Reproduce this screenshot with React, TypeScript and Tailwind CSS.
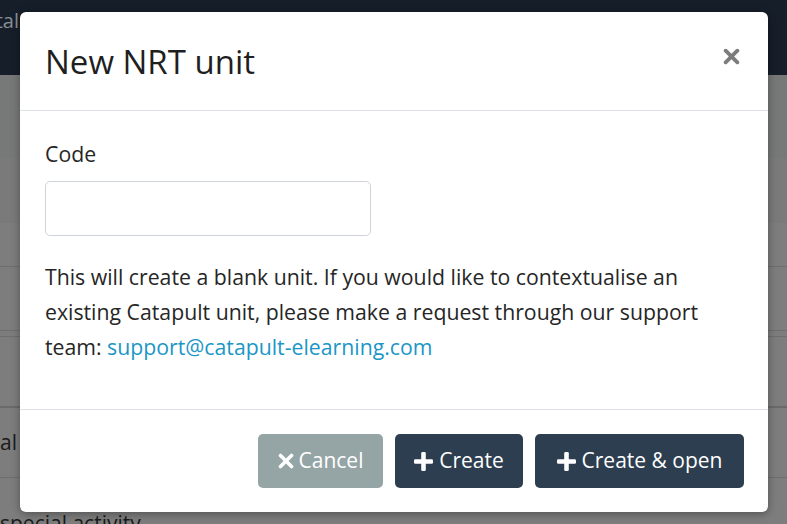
import React from 'react';

const TimesIcon: React.FC<{ className?: string }> = ({ className }) => (
  <svg viewBox="0 0 16 16" className={className} fill="none" stroke="currentColor" strokeWidth={3.6} strokeLinecap="round">
    <line x1="2.5" y1="2.5" x2="13.5" y2="13.5" />
    <line x1="13.5" y1="2.5" x2="2.5" y2="13.5" />
  </svg>
);

const PlusIcon: React.FC<{ className?: string }> = ({ className }) => (
  <svg viewBox="0 0 20 20" className={className} fill="currentColor">
    <rect x="0" y="7.6" width="20" height="4.8" rx="1.4" />
    <rect x="7.6" y="0" width="4.8" height="20" rx="1.4" />
  </svg>
);

const App: React.FC = () => {
  return (
    <div className="relative h-[524px] w-full overflow-hidden bg-[#7d7d7d] font-['Open_Sans','Noto_Sans',sans-serif]">
      {/* page behind the backdrop */}
      <div className="flex flex-col">
        <div className="flex h-[75px] bg-[#161e2a] pt-[6px]">
          <div className="flex w-[19px] justify-end overflow-hidden whitespace-nowrap text-[20px] leading-[30px] text-[#8a9097]">
            Digital
          </div>
        </div>
        <div className="h-[83px] bg-[#777979]"></div>
        <div className="h-[65px] bg-[#7a7a7a]"></div>
        <div className="h-[44px] border-b border-[#6e6e6e]"></div>
        <div className="h-[64px] border-b border-[#6e6e6e]"></div>
        <div className="h-[6px] border-b border-[#6e6e6e]"></div>
        <div className="h-[71px] border-b-2 border-[#6a6a6a]"></div>
        <div className="h-[70px] border-b border-[#6e6e6e] pt-[17px] text-[21px] leading-[35px] text-[#1a1a1a]">al</div>
        <div className="pt-[28px] text-[21px] leading-[35px] text-[#1a1a1a]">special activity</div>
      </div>

      {/* modal */}
      <div className="absolute left-[20px] top-[12px] flex h-[500px] w-[748px] flex-col rounded-[6px] bg-white shadow-[0_2px_8px_rgba(0,0,0,0.35)]">
        <div className="flex h-[99px] items-start justify-between border-b border-[#dee2e6] pl-[25px] pr-[28px] pt-[30px]">
          <h4 className="text-[33px] font-normal leading-[39px] text-[#1f1f1f]">New NRT unit</h4>
          <button className="mt-[6px] text-[#7c7c7c]">
            <TimesIcon className="h-[17px] w-[17px]" />
          </button>
        </div>

        <div className="h-[298px] px-[25px] pt-[25px] text-[21.25px] leading-[35px] text-[#262626]">
          <label className="mb-[10px] block">Code</label>
          <input type="text" className="block h-[55px] w-[326px] rounded-[5px] border border-[#ced4da] bg-white px-[12px] outline-none" />
          <p className="mt-[23px]">
            This will create a blank unit. If you would like to contextualise an
            <br />
            existing Catapult unit, please make a request through our support
            <br />
            team: <a href="#" className="text-[#1b96c6]">support@catapult-elearning.com</a>
          </p>
        </div>

        <div className="flex h-[103px] items-start justify-end gap-[12px] border-t border-[#dee2e6] pr-[24px] pt-[24px]">
          <button className="flex h-[54px] w-[125px] items-center justify-center gap-[5px] rounded-[5px] bg-[#95a5a6] text-[21px] text-white">
            <TimesIcon className="h-[16px] w-[16px]" />
            <span>Cancel</span>
          </button>
          <button className="flex h-[54px] w-[128px] items-center justify-center gap-[6px] rounded-[5px] bg-[#2c3e50] text-[21px] text-white">
            <PlusIcon className="h-[19px] w-[19px]" />
            <span>Create</span>
          </button>
          <button className="flex h-[54px] w-[209px] items-center justify-center gap-[6px] rounded-[5px] bg-[#2c3e50] text-[21px] text-white">
            <PlusIcon className="h-[19px] w-[19px]" />
            <span>Create &amp; open</span>
          </button>
        </div>
      </div>
    </div>
  );
};

export default App;
